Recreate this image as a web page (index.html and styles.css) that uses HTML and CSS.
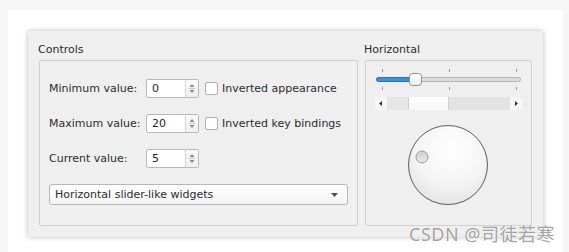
FILE: index.html
```html
<!DOCTYPE html>
<html>
<head>
<meta charset="utf-8">
<link rel="stylesheet" href="styles.css">
</head>
<body>
<div class="card">
  <div class="window">
    <div class="col controls">
      <div class="title">Controls</div>
      <div class="frame ctrl-frame">
        <div class="grid">
          <div class="label">Minimum value:</div>
          <div class="spin"><span class="val">0</span><span class="btns"><svg width="12" height="17" viewBox="0 0 12 17"><path d="M3.5 7 L6 4 L8.5 7Z" fill="#8a8a8a"/><path d="M3 8.5 H9" stroke="#c8c8c8" stroke-width="1"/><path d="M3.5 10 L6 13 L8.5 10Z" fill="#8a8a8a"/></svg></span></div>
          <div class="check"><span class="box"></span><span>Inverted appearance</span></div>

          <div class="label">Maximum value:</div>
          <div class="spin"><span class="val">20</span><span class="btns"><svg width="12" height="17" viewBox="0 0 12 17"><path d="M3.5 7 L6 4 L8.5 7Z" fill="#8a8a8a"/><path d="M3 8.5 H9" stroke="#c8c8c8" stroke-width="1"/><path d="M3.5 10 L6 13 L8.5 10Z" fill="#8a8a8a"/></svg></span></div>
          <div class="check"><span class="box"></span><span>Inverted key bindings</span></div>

          <div class="label">Current value:</div>
          <div class="spin"><span class="val">5</span><span class="btns"><svg width="12" height="17" viewBox="0 0 12 17"><path d="M3.5 7 L6 4 L8.5 7Z" fill="#8a8a8a"/><path d="M3 8.5 H9" stroke="#c8c8c8" stroke-width="1"/><path d="M3.5 10 L6 13 L8.5 10Z" fill="#8a8a8a"/></svg></span></div>
          <div></div>
        </div>
        <div class="combo"><span>Horizontal slider-like widgets</span><svg width="7" height="4" viewBox="0 0 7 4"><path d="M0 0 H7 L3.5 4Z" fill="#505050"/></svg></div>
      </div>
    </div>
    <div class="col horiz">
      <div class="title">Horizontal</div>
      <div class="frame h-frame">
        <svg class="slider" width="147" height="22" viewBox="0 0 147 22">
          <defs>
            <linearGradient id="hg" x1="0" y1="0" x2="0" y2="1">
              <stop offset="0" stop-color="#ffffff"/>
              <stop offset="1" stop-color="#ececec"/>
            </linearGradient>
          </defs>
          <g stroke="#9a9a9a" stroke-width="1">
            <path d="M7.5 0 V3"/><path d="M74.5 0 V3"/><path d="M141.5 0 V3"/>
            <path d="M7.5 18 V21"/><path d="M74.5 18 V21"/><path d="M141.5 18 V21"/>
          </g>
          <rect x="1.5" y="8.5" width="144" height="4" rx="2" fill="#dcdcdc" stroke="#b4b4b4"/>
          <rect x="1.5" y="8.5" width="36" height="4" rx="2" fill="#3d8ee0" stroke="#2f6fae"/>
          <rect x="34.5" y="4.5" width="12" height="12" rx="3" fill="url(#hg)" stroke="#8f8f8f"/>
        </svg>
        <div class="scroll">
          <span class="sbtn"><svg width="12" height="13" viewBox="0 0 12 13"><path d="M7 4 L4 6.5 L7 9Z" fill="#333"/></svg></span>
          <span class="trk a"></span>
          <span class="hdl"></span>
          <span class="trk b"></span>
          <span class="sbtn"><svg width="12" height="13" viewBox="0 0 12 13"><path d="M5 4 L8 6.5 L5 9Z" fill="#333"/></svg></span>
        </div>
        <svg class="dial" width="82" height="82" viewBox="0 0 82 82">
          <defs>
            <radialGradient id="dg" cx="0.55" cy="0.3" r="0.75">
              <stop offset="0" stop-color="#ffffff"/>
              <stop offset="0.6" stop-color="#f4f4f4"/>
              <stop offset="1" stop-color="#e2e2e2"/>
            </radialGradient>
            <linearGradient id="ng" x1="0" y1="0" x2="0" y2="1">
              <stop offset="0" stop-color="#cfcfcf"/>
              <stop offset="1" stop-color="#e8e8e8"/>
            </linearGradient>
          </defs>
          <circle cx="41" cy="41.5" r="40" fill="#d8d8d8" opacity="0.6"/>
          <circle cx="41" cy="41" r="39.5" fill="url(#dg)" stroke="#5e5e5e" stroke-width="1"/>
          <circle cx="15" cy="33" r="6" fill="url(#ng)" stroke="#9c9c9c" stroke-width="1"/>
        </svg>
      </div>
    </div>
  </div>
  <div class="watermark">CSDN @司徒若寒</div>
</div>
</body>
</html>
```

FILE: styles.css
```css
html, body {
  margin: 0;
  padding: 0;
}
body {
  width: 569px;
  height: 252px;
  overflow: hidden;
  background: #f6f6f6;
  font-family: "DejaVu Sans", sans-serif;
  font-size: 11px;
  color: #2c2c2c;
}
.card {
  position: relative;
  margin: 10px 0 0 8px;
  width: 555px;
  height: 242px;
  background: #ffffff;
  padding: 21px 0 0 20px;
  box-sizing: border-box;
}
.window {
  width: 515px;
  height: 206px;
  box-sizing: border-box;
  background: #efefef;
  box-shadow: 0 0 5px rgba(0, 0, 0, 0.28);
  display: flex;
  gap: 7px;
  padding: 12px 11px 11px 11px;
}
.col {
  display: flex;
  flex-direction: column;
}
.title {
  height: 14px;
  line-height: 14px;
  margin-bottom: 3px;
  margin-left: -1px;
}
.frame {
  border: 1px solid #d2d2d2;
  border-radius: 2px;
  box-sizing: border-box;
  height: 166px;
}
.controls .frame {
  width: 319px;
  padding: 18px 9px 0 9px;
}
.grid {
  display: grid;
  grid-template-columns: 97px 53px auto;
  grid-auto-rows: 19px;
  row-gap: 16px;
  align-items: center;
}
.label {
  line-height: 19px;
}
.spin {
  height: 19px;
  box-sizing: border-box;
  border: 1px solid #b9b9b9;
  border-radius: 2px;
  background: #ffffff;
  display: flex;
  align-items: center;
}
.spin .val {
  flex: 1;
  padding-left: 5px;
  color: #1e1e1e;
}
.spin .btns {
  width: 12px;
  height: 17px;
  border-left: 1px solid #d4d4d4;
  background: linear-gradient(#fafafa, #efefef);
  display: flex;
}
.check {
  display: flex;
  align-items: center;
  margin-left: 6px;
  gap: 4px;
}
.box {
  width: 13px;
  height: 13px;
  box-sizing: border-box;
  border: 1px solid #aeaeae;
  border-radius: 2px;
  background: #ffffff;
}
.combo {
  margin-top: 16px;
  height: 21px;
  box-sizing: border-box;
  border: 1px solid #b7b7b7;
  border-radius: 3px;
  background: linear-gradient(#ffffff, #f3f3f3);
  display: flex;
  align-items: center;
  justify-content: space-between;
  padding: 0 9px 0 5px;
}
.h-frame {
  width: 167px;
  padding: 8px 0 0 9px;
  display: flex;
  flex-direction: column;
}
.slider {
  display: block;
}
.scroll {
  margin-top: 6px;
  width: 147px;
  height: 13px;
  display: flex;
}
.sbtn {
  width: 12px;
  height: 13px;
  background: #f7f7f7;
  display: flex;
}
.trk {
  height: 13px;
  background: #e3e3e3;
}
.trk.a {
  width: 21px;
  background: #e6e6e6;
}
.trk.b {
  width: 61px;
}
.hdl {
  width: 41px;
  height: 13px;
  box-sizing: border-box;
  background: linear-gradient(#ffffff, #f6f6f6);
  border-left: 1px solid #cfcfcf;
  border-right: 1px solid #cfcfcf;
}
.dial {
  display: block;
  margin: 14px 0 0 32px;
}
.watermark {
  position: absolute;
  left: 401px;
  top: 210px;
  font-family: "Noto Sans", "Noto Sans CJK SC", sans-serif;
  font-size: 18px;
  letter-spacing: 0.5px;
  color: rgba(140, 140, 140, 0.8);
  text-shadow: 0 0 1px #fff;
  white-space: nowrap;
}
```
